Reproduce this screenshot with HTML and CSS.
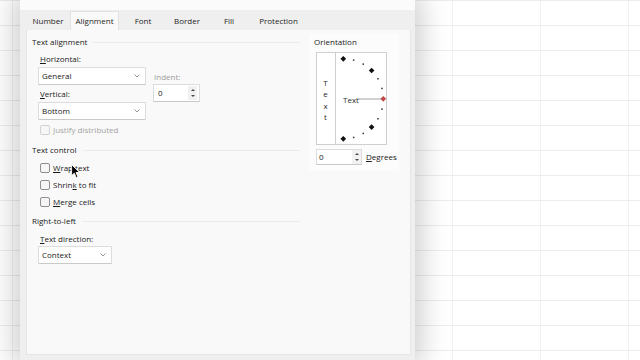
FILE: index.html
```html
<!DOCTYPE html>
<html lang="en">
<head>
<meta charset="UTF-8" />
<meta name="viewport" content="width=device-width, initial-scale=1" />
<title>Format Cells</title>
<link rel="stylesheet" href="styles.css">
</head>
<body>

<div class="sheet">
  <div class="dialog">
    <div class="tabs">
      <span class="tab tab-number">Number</span>
      <span class="tab tab-align active">Alignment</span>
      <span class="tab tab-font">Font</span>
      <span class="tab tab-border">Border</span>
      <span class="tab tab-fill">Fill</span>
      <span class="tab tab-protect">Protection</span>
    </div>

    <div class="panel">
      <div class="col-left">
        <div class="group-title first">Text alignment</div>

        <div class="align-row">
          <div class="align-fields">
            <div class="field-label"><u>H</u>orizontal:</div>
            <div class="select wide">
              <span>General</span>
              <svg class="chev" width="6" height="4" viewBox="0 0 6 4"><polyline points="0.5,0.5 3,3 5.5,0.5" fill="none" stroke="#8a8a8a" stroke-width="0.9"/></svg>
            </div>
            <div class="field-label next"><u>V</u>ertical:</div>
            <div class="select wide">
              <span>Bottom</span>
              <svg class="chev" width="6" height="4" viewBox="0 0 6 4"><polyline points="0.5,0.5 3,3 5.5,0.5" fill="none" stroke="#8a8a8a" stroke-width="0.9"/></svg>
            </div>
          </div>

          <div class="indent">
            <div class="field-label muted">Indent:</div>
            <div class="spin indent-spin">
              <span class="spin-value">0</span>
              <span class="spin-btns"><i class="up"></i><i class="down"></i></span>
            </div>
          </div>
        </div>

        <div class="check disabled justify"><span class="box"></span>Justify distributed</div>

        <div class="group-title">Text control</div>
        <div class="check wrap"><span class="box"></span><span><u>W</u>rap text</span></div>
        <div class="check"><span class="box"></span><span>Shrin<u>k</u> to fit</span></div>
        <div class="check"><span class="box"></span><span><u>M</u>erge cells</span></div>

        <div class="group-title rtl">Right-to-left</div>
        <div class="field-label dir"><u>T</u>ext direction:</div>
        <div class="select narrow">
          <span>Context</span>
          <svg class="chev" width="6" height="4" viewBox="0 0 6 4"><polyline points="0.5,0.5 3,3 5.5,0.5" fill="none" stroke="#8a8a8a" stroke-width="0.9"/></svg>
        </div>
      </div>

      <div class="orient">
        <div class="orient-title">Orientation</div>
        <svg class="orient-box" width="71" height="93" viewBox="0 0 71 93">
          <rect x="0.5" y="0.5" width="70" height="92" fill="#fff" stroke="#cfcfcf"/>
          <line x1="19.5" y1="0.5" x2="19.5" y2="92.5" stroke="#cfcfcf"/>
          <text class="vt" x="9.5" y="33.5">T</text>
          <text class="vt" x="9.5" y="45">e</text>
          <text class="vt" x="9.5" y="56.5">x</text>
          <text class="vt" x="9.5" y="68">t</text>

          <text class="arc-label" x="27" y="51">Text</text>
          <line x1="42" y1="47" x2="66" y2="47" stroke="#8c8c8c" stroke-width="0.8"/>

          <!-- dots every 15 degrees, big ones on 45s -->
          <rect class="big" x="25.3" y="4.8" width="4" height="4" transform="rotate(45 27.3 6.8)"/>
          <rect class="small" x="36.9" y="7.4" width="1.5" height="1.5"/>
          <rect class="small" x="46.5" y="11.4" width="1.5" height="1.5"/>
          <rect class="big" x="53.6" y="16.5" width="4" height="4" transform="rotate(45 55.6 18.5)"/>
          <rect class="small" x="61.2" y="26" width="1.5" height="1.5"/>
          <rect class="small" x="65.2" y="35.7" width="1.5" height="1.5"/>
          <rect class="red" x="65.3" y="44.8" width="4" height="4" transform="rotate(45 67.3 46.8)"/>
          <rect class="small" x="65.2" y="56.4" width="1.5" height="1.5"/>
          <rect class="small" x="61.2" y="66" width="1.5" height="1.5"/>
          <rect class="big" x="53.6" y="73.1" width="4" height="4" transform="rotate(45 55.6 75.1)"/>
          <rect class="small" x="46.5" y="80.7" width="1.5" height="1.5"/>
          <rect class="small" x="36.9" y="84.7" width="1.5" height="1.5"/>
          <rect class="big" x="25.3" y="84.8" width="4" height="4" transform="rotate(45 27.3 86.8)"/>
        </svg>
        <div class="degrees">
          <div class="spin deg-spin">
            <span class="spin-value">0</span>
            <span class="spin-btns"><i class="up"></i><i class="down"></i></span>
          </div>
          <span class="deg-label"><u>D</u>egrees</span>
        </div>
      </div>
    </div>
  </div>

  <svg class="cursor" width="10" height="15" viewBox="0 0 10 15">
    <path d="M0.6 0.6 L0.6 11.6 L3.3 9.2 L5.3 13.8 L7 13 L5 8.5 L8.6 8.5 Z" fill="#000" stroke="#fff" stroke-width="0.9" stroke-linejoin="round"/>
  </svg>
</div>

</body>
</html>
```

FILE: styles.css
```css
* {
  box-sizing: border-box;
}

body {
  margin: 0;
  font-family: 'Open Sans', 'Noto Sans', sans-serif;
  font-size: 8px;
  line-height: 12px;
  color: #1a1a1a;
}

u {
  text-decoration-thickness: 0.6px;
  text-underline-offset: 1px;
}

/* spreadsheet behind the dialog */
.sheet {
  position: relative;
  width: 640px;
  height: 360px;
  overflow: hidden;
  padding-left: 20px;
  background-color: #fff;
  background-image:
    linear-gradient(#ececec 1px, transparent 1px),
    linear-gradient(90deg, #f0f0f0 1px, transparent 1px);
  background-size: 88px 25px;
  background-position: 12px 0;
}

.dialog {
  width: 395px;
  height: 360px;
  padding: 10px 4px 0 6px;
  background: linear-gradient(#fbfbfb 0 10px, #efefef 10px);
  box-shadow: 0 0 26px 6px rgb(0 0 0 / 0.2);
  display: flex;
  flex-direction: column;
}

/* tabs */
.tabs {
  display: flex;
  height: 20px;
}

.tab {
  height: 19px;
  margin-top: 1px;
  line-height: 19px;
  text-align: center;
  color: #262626;
}

.tab.active {
  background: #f9f9f9;
  border: 1px solid #e2e2e2;
  border-bottom: none;
  line-height: 18px;
}

.tab-number { width: 44px; }
.tab-align { width: 49px; }
.tab-font { width: 48px; }
.tab-border { width: 40px; }
.tab-fill { width: 44px; }
.tab-protect { width: 55px; }

/* main panel */
.panel {
  height: 325px;
  background: #f9f9f9;
  border: 1px solid #e6e6e6;
  border-top: none;
  padding: 6px 0 0 5px;
  display: flex;
  align-items: flex-start;
}

.col-left {
  width: 268px;
}

.group-title {
  display: flex;
  align-items: center;
  height: 12px;
  margin-top: 8px;
}

.group-title::after {
  content: "";
  flex: 1;
  margin-left: 6px;
  border-top: 1px solid #ebebeb;
}

.group-title.first {
  margin-top: 0;
}

.group-title.rtl {
  margin-top: 7px;
}

.align-row {
  display: flex;
  margin-top: 5px;
  margin-left: 6px;
}

.field-label {
  height: 12px;
  padding-left: 2px;
}

.field-label.next {
  margin-top: 3px;
}

.field-label.muted {
  color: #9c9c9c;
  padding-left: 1px;
}

.field-label.dir {
  margin-top: 6px;
  margin-left: 6px;
}

.select {
  height: 18px;
  margin-top: 2px;
  padding: 0 5px 0 3px;
  background: #fff;
  border: 1px solid #dcdcdc;
  border-bottom-color: #c9c9c9;
  border-radius: 1px;
  display: flex;
  align-items: center;
  justify-content: space-between;
}

.select.wide {
  width: 108px;
}

.select.narrow {
  width: 74px;
  margin-top: 1px;
  margin-left: 6px;
}

.indent {
  margin-left: 7px;
  padding-top: 18px;
}

.spin {
  background: #fff;
  border: 1px solid #dcdcdc;
  border-bottom-color: #c9c9c9;
  display: flex;
  align-items: center;
  justify-content: space-between;
}

.indent-spin {
  width: 47px;
  height: 18px;
  margin-top: 1px;
  padding: 0 2px 0 4px;
}

.spin-btns {
  width: 9px;
  height: 14px;
  background: #f1f1f1;
  display: flex;
  flex-direction: column;
  align-items: center;
  justify-content: center;
  gap: 4px;
}

.spin-btns .up {
  border-left: 2.5px solid transparent;
  border-right: 2.5px solid transparent;
  border-bottom: 2.5px solid #4a4a4a;
}

.spin-btns .down {
  border-left: 2.5px solid transparent;
  border-right: 2.5px solid transparent;
  border-top: 2.5px solid #4a4a4a;
}

/* checkboxes */
.check {
  display: flex;
  align-items: center;
  gap: 3px;
  height: 12px;
  margin-top: 5px;
  margin-left: 8px;
}

.check .box {
  width: 10px;
  height: 10px;
  border: 1px solid #8f8f8f;
  border-radius: 2px;
  background: #f6f6f6;
}

.check.disabled {
  color: #a3a3a3;
  margin-top: 4px;
}

.check.disabled .box {
  border-color: #d2d2d2;
}

.check.wrap {
  margin-top: 6px;
}

/* orientation group */
.orient {
  width: 90px;
  margin-left: 9px;
  margin-top: -2px;
  padding: 2px 0 6px 5px;
  background: #fcfcfc;
}

.orient-title {
  height: 12px;
}

.orient-box {
  display: block;
  margin: 4px 0 0 2px;
}

.orient-box text {
  font-family: 'Open Sans', 'Noto Sans', sans-serif;
  font-size: 8px;
  fill: #2a2a2a;
}

.orient-box .vt {
  text-anchor: middle;
}

.orient-box .big {
  fill: #111;
}

.orient-box .small {
  fill: #333;
}

.orient-box .red {
  fill: #c04a4a;
}

.degrees {
  display: flex;
  align-items: center;
  margin: 4px 0 0 2px;
}

.deg-spin {
  width: 46px;
  height: 16px;
  padding: 0 0 0 2px;
}

.deg-spin .spin-btns {
  height: 14px;
}

.deg-label {
  margin-left: 4px;
}

.cursor {
  position: absolute;
  left: 71px;
  top: 164px;
}
```
